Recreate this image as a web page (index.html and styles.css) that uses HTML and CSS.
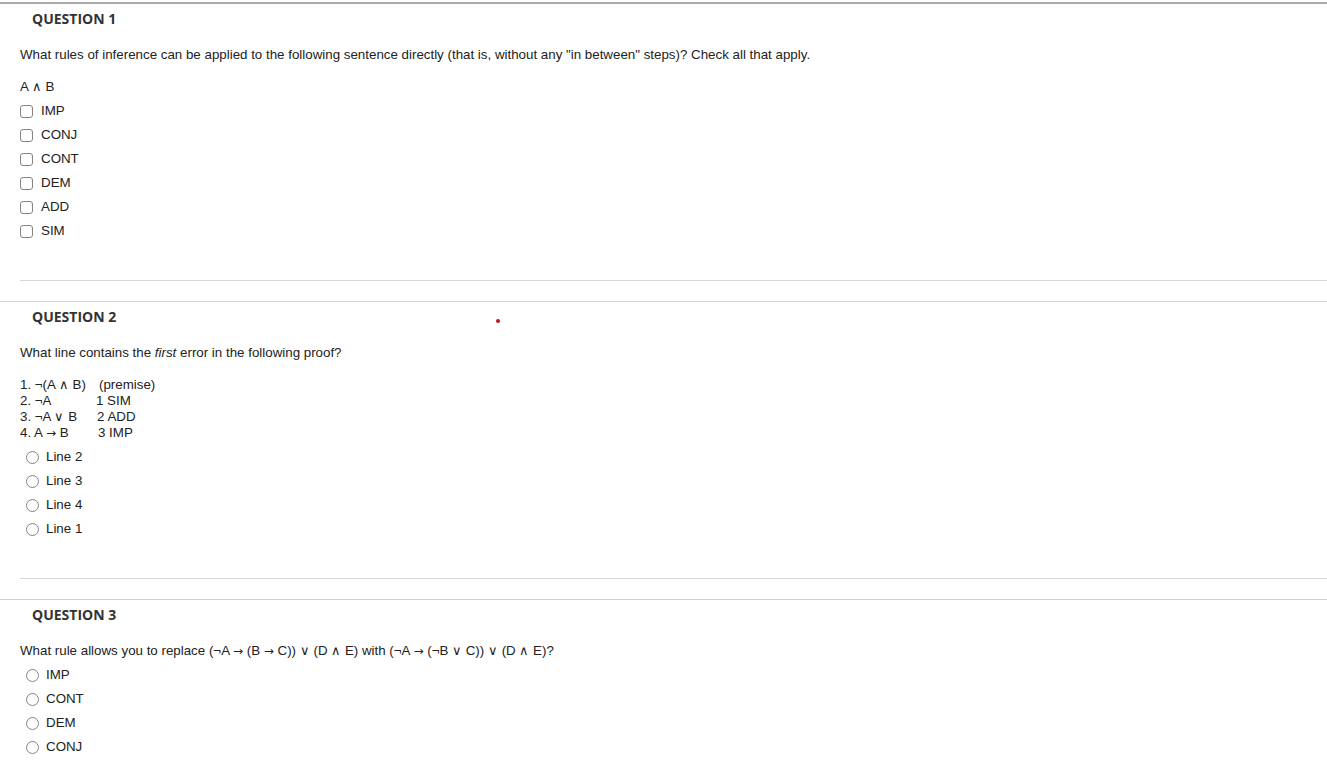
FILE: index.html
```html
<!DOCTYPE html>
<html>
<head>
<meta charset="utf-8">
<link rel="stylesheet" href="styles.css">
</head>
<body>
<section class="question first">
  <h2 class="q-title">QUESTION 1</h2>
  <div class="q-body">
    <p class="stem">What rules of inference can be applied to the following sentence directly (that is, without any "in between" steps)? Check all that apply.</p>
    <p class="formula">A ∧ B</p>
    <ul class="options">
      <li class="opt"><span class="box"></span>IMP</li>
      <li class="opt"><span class="box"></span>CONJ</li>
      <li class="opt"><span class="box"></span>CONT</li>
      <li class="opt"><span class="box"></span>DEM</li>
      <li class="opt"><span class="box"></span>ADD</li>
      <li class="opt"><span class="box"></span>SIM</li>
    </ul>
  </div>
  <div class="divider"></div>
</section>
<section class="question">
  <h2 class="q-title">QUESTION 2</h2>
  <span class="dot"></span>
  <div class="q-body">
    <p class="stem">What line contains the <em>first</em> error in the following proof?</p>
    <div class="proof">
      <div class="pl"><span class="pc pc1">1. ¬(A ∧ B)</span><span class="pr">(premise)</span></div>
      <div class="pl"><span class="pc pc2">2. ¬A</span><span class="pr">1 SIM</span></div>
      <div class="pl"><span class="pc pc3">3. ¬A ∨ B</span><span class="pr">2 ADD</span></div>
      <div class="pl"><span class="pc pc4">4. A <span class="arr">→</span> B</span><span class="pr">3 IMP</span></div>
    </div>
    <ul class="options radios after-proof">
      <li class="opt"><span class="radio"></span>Line 2</li>
      <li class="opt"><span class="radio"></span>Line 3</li>
      <li class="opt"><span class="radio"></span>Line 4</li>
      <li class="opt"><span class="radio"></span>Line 1</li>
    </ul>
  </div>
  <div class="divider"></div>
</section>
<section class="question">
  <h2 class="q-title">QUESTION 3</h2>
  <div class="q-body">
    <p class="stem">What rule allows you to replace (¬A <span class="arr">→</span> (B <span class="arr">→</span> C)) ∨ (D ∧ E) with (¬A <span class="arr">→</span> (¬B ∨ C)) ∨ (D ∧ E)?</p>
    <ul class="options radios">
      <li class="opt"><span class="radio"></span>IMP</li>
      <li class="opt"><span class="radio"></span>CONT</li>
      <li class="opt"><span class="radio"></span>DEM</li>
      <li class="opt"><span class="radio"></span>CONJ</li>
    </ul>
  </div>
</section>
</body>
</html>
```
FILE: styles.css
```css
html, body {
  margin: 0;
  padding: 0;
  background: #fff;
}
body {
  padding-top: 2px;
  font-family: "Liberation Sans", Arial, sans-serif;
  font-size: 13.33px;
  color: #222;
}
.question {
  position: relative;
  border-top: 1px solid #cfcfcf;
}
.question.first {
  border-top: 2px solid #a9a9a9;
}
.q-title {
  margin: 0 0 0 32px;
  padding-top: 6px;
  font-family: "Open Sans", sans-serif;
  font-weight: 700;
  font-size: 14px;
  line-height: 18px;
  color: #333;
}
.q-body {
  padding-left: 20px;
}
.stem {
  margin: 18px 0 0 0;
  line-height: 18px;
}
.stem em {
  font-style: italic;
}
.arr {
  font-family: "DejaVu Sans", sans-serif;
  font-size: 12px;
  line-height: 0;
}
.formula {
  margin: 14px 0 0 0;
  line-height: 18px;
}
.options {
  list-style: none;
  margin: 3px 0 0 0;
  padding: 0;
}
.options.after-proof {
  margin-top: 4px;
}
.opt {
  display: flex;
  align-items: center;
  height: 24px;
  line-height: 24px;
}
.box {
  box-sizing: border-box;
  width: 13px;
  height: 13px;
  border: 1px solid #858585;
  border-radius: 3px;
  margin-right: 8px;
  flex: none;
}
.radios .opt {
  padding-left: 6px;
}
.radio {
  box-sizing: border-box;
  width: 13px;
  height: 13px;
  border: 1px solid #858585;
  border-radius: 50%;
  margin-right: 7px;
  flex: none;
}
.proof {
  margin-top: 15px;
}
.pl {
  display: flex;
  line-height: 16px;
  height: 16px;
}
.pc {
  display: inline-block;
}
.pc1 { width: 79px; }
.pc2 { width: 76px; }
.pc3 { width: 77px; }
.pc4 { width: 78px; }
.divider {
  margin: 37px 0 20px 20px;
  border-top: 1px solid #d8d8d8;
}
.dot {
  position: absolute;
  left: 496px;
  top: 17px;
  width: 4px;
  height: 4px;
  border-radius: 50%;
  background: #c0141c;
}
```
